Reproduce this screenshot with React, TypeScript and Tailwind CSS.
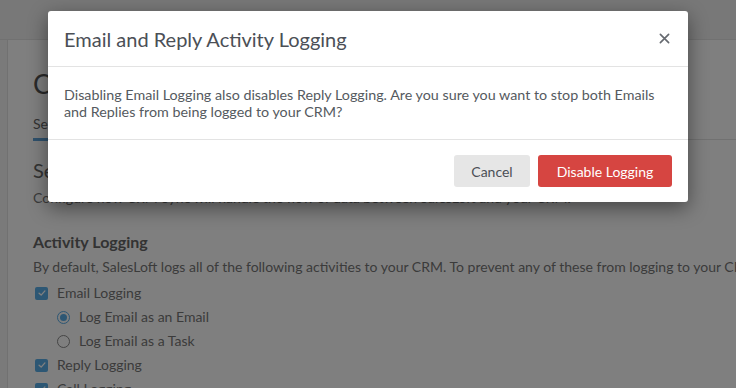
import React from "react";

function Check() {
  return (
    <span className="flex h-[13px] w-[13px] shrink-0 items-center justify-center rounded-[2px] bg-[#5aaee8]">
      <svg viewBox="0 0 12 12" className="h-[10px] w-[10px]" fill="none" stroke="white" strokeWidth="1.6" strokeLinecap="round" strokeLinejoin="round">
        <path d="M2.5 6.2 L5 8.5 L9.5 3.5" />
      </svg>
    </span>
  );
}

function Radio({ on }: { on?: boolean }) {
  return (
    <span className={`flex h-[13px] w-[13px] shrink-0 items-center justify-center rounded-full border ${on ? "border-[#5aaee8]" : "border-[#8a8a8a]"} bg-white`}>
      {on && <span className="h-[7px] w-[7px] rounded-full bg-[#5aaee8]" />}
    </span>
  );
}

export default function App() {
  return (
    <div className="relative h-[388px] w-[736px] overflow-hidden bg-white" style={{ fontFamily: "Lato, 'Open Sans', sans-serif" }}>
      {/* page */}
      <div className="h-[40px] border-b border-[#e2e2e2] bg-[#f0f0f0]" />
      <div className="flex h-[348px]">
        <div className="w-[8px] shrink-0 border-r border-[#e2e2e2] bg-[#f5f5f5]" />
        <div className="min-w-0 flex-1 pl-[25px] text-[#777]">
          <div className="pt-[26px] text-[27px] leading-[36px] text-[#555]">CRM Settings</div>
          <div className="mt-[12px] flex border-b border-[#e2e2e2]">
            <div className="-mb-[2px] border-b-[3px] border-[#5ea2d8] pb-[4px] text-[14px] leading-[20px] text-[#666]">Settings</div>
          </div>
          <div className="mt-[17px] text-[20px] leading-[26px] text-[#666]">Settings</div>
          <div className="mt-[6px] whitespace-nowrap text-[14px] leading-[18px]">Configure how CRM Sync will handle the flow of data between SalesLoft and your CRM.</div>
          <div className="mt-[24px] text-[16px] font-bold leading-[22px] text-[#666]">Activity Logging</div>
          <div className="mt-[5px] whitespace-nowrap text-[14px] leading-[18px]">By default, SalesLoft logs all of the following activities to your CRM. To prevent any of these from logging to your CRM, uncheck them below.</div>
          <div className="mt-[5px] flex flex-col text-[14px] leading-[24px]">
            <div className="flex items-center gap-[9px] pl-[2px]"><Check /><span>Email Logging</span></div>
            <div className="flex items-center gap-[9px] pl-[24px]"><Radio on /><span>Log Email as an Email</span></div>
            <div className="flex items-center gap-[9px] pl-[24px]"><Radio /><span>Log Email as a Task</span></div>
            <div className="flex items-center gap-[9px] pl-[2px]"><Check /><span>Reply Logging</span></div>
            <div className="flex items-center gap-[9px] pl-[2px]"><Check /><span>Call Logging</span></div>
          </div>
        </div>
      </div>

      {/* overlay */}
      <div className="absolute inset-0 bg-black/50" />

      {/* modal */}
      <div className="absolute left-[48px] top-[11px] w-[640px] rounded-[3px] bg-white shadow-[0_6px_20px_rgba(0,0,0,0.45)]">
        <div className="flex h-[56px] items-center justify-between border-b border-[#e3e3e3] pl-[16px] pr-[18px]">
          <div className="text-[20px] text-[#4b4f56]">Email and Reply Activity Logging</div>
          <svg viewBox="0 0 12 12" className="h-[11px] w-[11px]" stroke="#666a70" strokeWidth="1.8" strokeLinecap="round">
            <path d="M1.5 1.5 L10.5 10.5 M10.5 1.5 L1.5 10.5" />
          </svg>
        </div>
        <div className="border-b border-[#e3e3e3] pb-[19px] pl-[16px] pr-[30px] pt-[19px] text-[14.3px] leading-[17px] text-[#555a60]">
          Disabling Email Logging also disables Reply Logging. Are you sure you want to stop both Emails and Replies from being logged to your CRM?
        </div>
        <div className="flex justify-end gap-[8px] px-[16px] pb-[15px] pt-[15px]">
          <button className="h-[32px] w-[76px] rounded-[3px] bg-[#e6e6e6] text-[14px] text-[#4b4f56]">Cancel</button>
          <button className="h-[32px] w-[134px] rounded-[3px] bg-[#d64541] text-[14px] text-white">Disable Logging</button>
        </div>
      </div>
    </div>
  );
}
